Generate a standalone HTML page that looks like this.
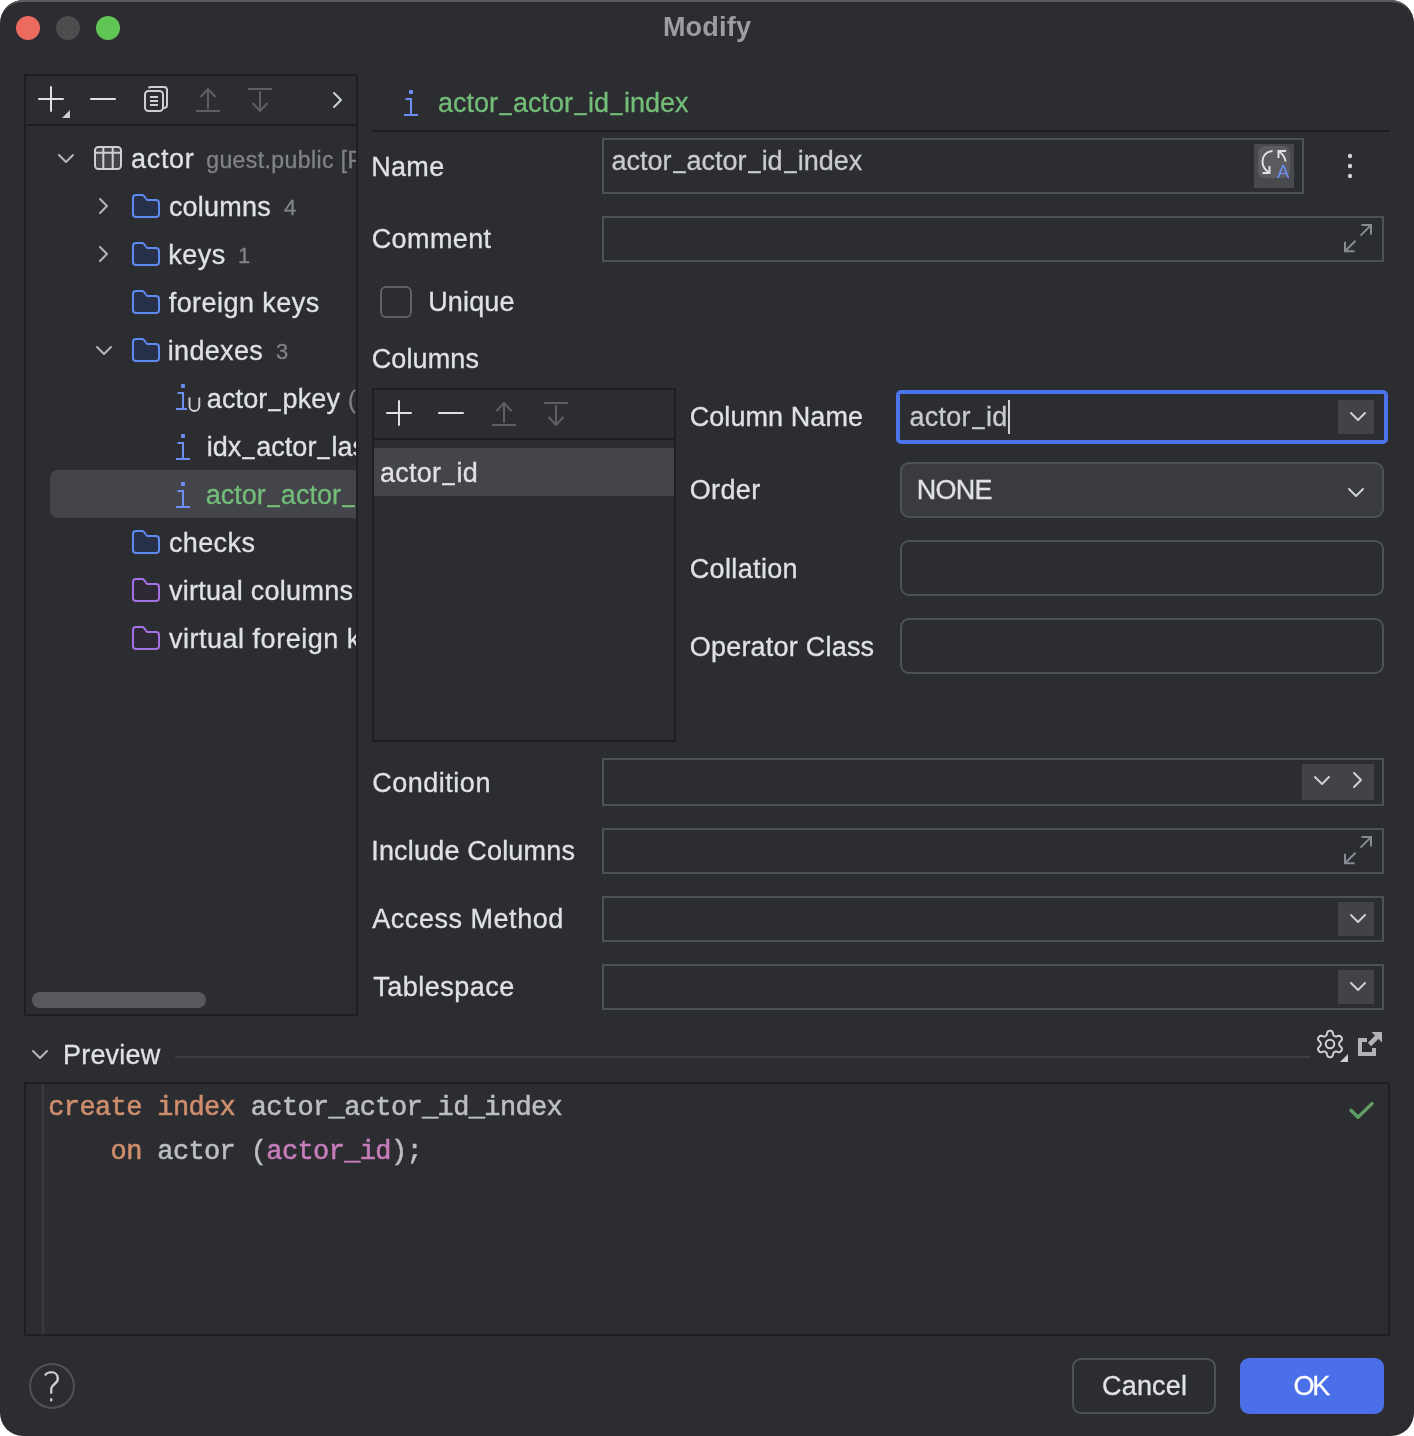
<!DOCTYPE html>
<html lang="en">
<head>
<meta charset="utf-8">
<title>Modify</title>
<style>
*{box-sizing:border-box;margin:0;padding:0}
html,body{width:1414px;height:1436px;background:#fff;overflow:hidden}
body{font-family:"Liberation Sans",sans-serif;font-size:27px;color:#dfe1e5;position:relative}
#win{position:absolute;left:0;top:0;width:1414px;height:1436px;background:#2b2d30;border-radius:23px;overflow:hidden;will-change:transform}
#win:before{content:"";position:absolute;left:0;top:0;right:0;bottom:0;border-radius:23px;border-top:2px solid #5a5b5d;pointer-events:none}
.abs{position:absolute}
.t{position:absolute;white-space:nowrap;line-height:32px;height:32px;-webkit-text-stroke:0.3px currentColor}
.box{position:absolute;border:2px solid #4e5157}
.dark{position:absolute;border:2px solid #1e1f22}
.hl{position:absolute;height:2px;background:#1e1f22}
.dot{position:absolute;width:24px;height:24px;border-radius:50%;top:16px}
svg{position:absolute;overflow:visible}
.ic{fill:none;stroke:#ced0d6;stroke-width:2;stroke-linecap:round;stroke-linejoin:round}
.dim{fill:none;stroke:#5f6063;stroke-width:2;stroke-linecap:round;stroke-linejoin:round}
.fb{fill:#28304a;stroke:#5c8af0;stroke-width:2;stroke-linejoin:round}
.fp{fill:#2f2936;stroke:#a571e6;stroke-width:2;stroke-linejoin:round}
.row{position:absolute;left:0;width:600px;height:48px}
.row .t{top:8px}
.row .sm{top:9px}
.sm{font-size:23px}
.u{display:inline-block;position:relative;top:-3px;transform:scaleX(.8)}
.g{color:#818388}
.dg{font-size:22px}
.lbl{color:#dfe1e5}
</style>
</head>
<body>
<div id="win">
<!-- TITLEBAR -->
<div class="dot" style="left:16px;background:#ed6a5e"></div>
<div class="dot" style="left:56px;background:#4c4d4f"></div>
<div class="dot" style="left:96px;background:#60c554"></div>
<div class="t" id="title" style="left:0;width:1414px;text-align:center;top:11px;font-weight:bold;color:#9c9d9f;-webkit-text-stroke:0;letter-spacing:0.2px">Modify</div>

<!-- LEFT PANEL -->
<div class="dark" style="left:24px;top:74px;width:334px;height:942px"></div>
<div class="hl" style="left:26px;top:124px;width:330px"></div>
<div id="tree" class="abs" style="left:0;top:0;width:356px;height:1014px;overflow:hidden">
<div class="row" style="top:135px"><svg style="left:58px;top:0" width="20" height="48"><path class="ic" style="stroke:#b4b5b9" d="M1,20L8,27L15,20"/></svg><svg style="left:94px;top:11px" width="28" height="24"><rect class="ic" x="1" y="1" width="26" height="22" rx="3.5" style="fill:#43454a"/><path class="ic" style="stroke-linecap:butt" d="M1,6.7H27M9.3,1V23M18.7,1V23"/></svg><span class="t" id="t_actor" style="left:131.0px;letter-spacing:0.7px">actor</span><span class="t g sm" id="t_guest" style="left:206.2px;letter-spacing:0.41px">guest.public [P</span></div>
<div class="row" style="top:183px"><svg style="left:99px;top:0" width="20" height="48"><path class="ic" style="stroke:#b4b5b9" d="M1,16L8,23L1,30"/></svg><svg style="left:132px;top:11px" width="28" height="24"><path class="fb" d="M1,4a3,3 0 0 1 3,-3h6.2a2,2 0 0 1 1.5,0.7l3.3,4.3h9a3,3 0 0 1 3,3v11a3,3 0 0 1 -3,3h-20a3,3 0 0 1 -3,-3z"/></svg><span class="t" id="t_columns" style="left:168.9px;letter-spacing:0.22px">columns</span><span class="t g sm dg" id="t_4" style="left:284px">4</span></div>
<div class="row" style="top:231px"><svg style="left:99px;top:0" width="20" height="48"><path class="ic" style="stroke:#b4b5b9" d="M1,16L8,23L1,30"/></svg><svg style="left:132px;top:11px" width="28" height="24"><path class="fb" d="M1,4a3,3 0 0 1 3,-3h6.2a2,2 0 0 1 1.5,0.7l3.3,4.3h9a3,3 0 0 1 3,3v11a3,3 0 0 1 -3,3h-20a3,3 0 0 1 -3,-3z"/></svg><span class="t" id="t_keys" style="left:168.2px;letter-spacing:0.5px">keys</span><span class="t g sm dg" id="t_1" style="left:238px">1</span></div>
<div class="row" style="top:279px"><svg style="left:132px;top:11px" width="28" height="24"><path class="fb" d="M1,4a3,3 0 0 1 3,-3h6.2a2,2 0 0 1 1.5,0.7l3.3,4.3h9a3,3 0 0 1 3,3v11a3,3 0 0 1 -3,3h-20a3,3 0 0 1 -3,-3z"/></svg><span class="t" id="t_fkeys" style="left:168.7px;letter-spacing:0.45px">foreign keys</span></div>
<div class="row" style="top:327px"><svg style="left:96px;top:0" width="20" height="48"><path class="ic" style="stroke:#b4b5b9" d="M1,20L8,27L15,20"/></svg><svg style="left:132px;top:11px" width="28" height="24"><path class="fb" d="M1,4a3,3 0 0 1 3,-3h6.2a2,2 0 0 1 1.5,0.7l3.3,4.3h9a3,3 0 0 1 3,3v11a3,3 0 0 1 -3,3h-20a3,3 0 0 1 -3,-3z"/></svg><span class="t" id="t_indexes" style="left:167.8px;letter-spacing:0.32px">indexes</span><span class="t g sm dg" id="t_3" style="left:276px">3</span></div>
<div class="row" style="top:375px"><svg style="left:176px;top:9px" width="26" height="30"><rect x="5" y="0" width="4" height="4" rx="1" fill="#6c8ef5" stroke="none"/><path d="M1.5,9H7V24" fill="none" stroke="#6c8ef5" stroke-width="2"/><path d="M0,25H11" stroke="#6c8ef5" stroke-width="2"/><path d="M13.5,13.5v8.6a4.9,4.9 0 0 0 9.8,0v-8.6" fill="none" stroke="#ced0d6" stroke-width="1.9"/></svg><span class="t" id="t_pkey" style="left:206.8px;letter-spacing:0.12px">actor<span class="u">_</span>pkey</span><span class="t g sm" id="t_paren" style="left:348px">(actor_id) UNIQUE</span></div>
<div class="row" style="top:423px"><svg style="left:176px;top:11px" width="24" height="28"><rect x="5" y="0" width="4" height="4" rx="1" fill="#6c8ef5" stroke="none"/><path d="M1.5,9H7V24" fill="none" stroke="#6c8ef5" stroke-width="2"/><path d="M0,25H14" stroke="#6c8ef5" stroke-width="2"/></svg><span class="t" id="t_idx" style="left:206.8px;letter-spacing:0px">idx<span class="u">_</span>actor<span class="u">_</span>last<span class="u">_</span>name</span></div>
<div class="row" style="top:471px"><div class="abs" style="left:50px;top:-1px;width:320px;height:48px;background:#43454a;border-radius:8px 0 0 8px"></div><svg style="left:176px;top:11px" width="24" height="28"><rect x="5" y="0" width="4" height="4" rx="1" fill="#6c8ef5" stroke="none"/><path d="M1.5,9H7V24" fill="none" stroke="#6c8ef5" stroke-width="2"/><path d="M0,25H14" stroke="#6c8ef5" stroke-width="2"/></svg><span class="t" id="t_aa" style="left:205.8px;color:#73bd79">actor<span class="u">_</span>actor<span class="u">_</span>id<span class="u">_</span>index</span></div>
<div class="row" style="top:519px"><svg style="left:132px;top:11px" width="28" height="24"><path class="fb" d="M1,4a3,3 0 0 1 3,-3h6.2a2,2 0 0 1 1.5,0.7l3.3,4.3h9a3,3 0 0 1 3,3v11a3,3 0 0 1 -3,3h-20a3,3 0 0 1 -3,-3z"/></svg><span class="t" id="t_checks" style="left:168.9px;letter-spacing:0.4px">checks</span></div>
<div class="row" style="top:567px"><svg style="left:132px;top:11px" width="28" height="24"><path class="fp" d="M1,4a3,3 0 0 1 3,-3h6.2a2,2 0 0 1 1.5,0.7l3.3,4.3h9a3,3 0 0 1 3,3v11a3,3 0 0 1 -3,3h-20a3,3 0 0 1 -3,-3z"/></svg><span class="t" id="t_vcol" style="left:168.9px;letter-spacing:0.29px">virtual columns</span></div>
<div class="row" style="top:615px"><svg style="left:132px;top:11px" width="28" height="24"><path class="fp" d="M1,4a3,3 0 0 1 3,-3h6.2a2,2 0 0 1 1.5,0.7l3.3,4.3h9a3,3 0 0 1 3,3v11a3,3 0 0 1 -3,3h-20a3,3 0 0 1 -3,-3z"/></svg><span class="t" id="t_vfk" style="left:168.9px;letter-spacing:0.52px">virtual foreign keys</span></div>
<div class="abs" style="left:32px;top:992px;width:174px;height:16px;border-radius:8px;background:#58595c"></div>
</div>
<svg style="left:0;top:0" width="1414" height="130">
<path class="ic" style="stroke:#dfe1e5" d="M39,99H63M51,87V111"/>
<path d="M70,110V118H62Z" fill="#ced0d6"/>
<path class="ic" style="stroke:#dfe1e5" d="M91,99H115"/>
<rect class="ic" x="145" y="91" width="18" height="20" rx="3.5"/>
<path class="ic" d="M149,87.5q1,-0.5 2,-0.5h13a3,3 0 0 1 3,3v15a3,3 0 0 1 -2.5,3"/>
<path class="ic" style="stroke-linecap:butt" d="M150,97h8M150,101h8M150,105h8"/>
<path class="dim" d="M197,111H219M208,108V89M201,96.5L208,89L215,96.5"/>
<path class="dim" d="M249,89H271M260,92V111M253,103.5L260,111L267,103.5"/>
<path class="ic" d="M334,93L341,100L334,107"/>
</svg>

<!-- RIGHT FORM -->
<svg style="left:404px;top:90px" width="16" height="28"><rect x="5" y="0" width="4" height="4" rx="1" fill="#6c8ef5"/><path d="M1.5,9H7V24" fill="none" stroke="#6c8ef5" stroke-width="2"/><path d="M0,25H14" stroke="#6c8ef5" stroke-width="2"/></svg>
<span class="t" id="h_title" style="left:437.9px;top:87.1px;color:#73bd79;letter-spacing:0.0px">actor<span class="u">_</span>actor<span class="u">_</span>id<span class="u">_</span>index</span>
<div class="hl" style="left:372px;top:130px;width:1018px"></div>
<span class="t" id="l_name" style="left:371.2px;top:150.5px;letter-spacing:0.33px">Name</span>
<div class="box" style="left:602px;top:138px;width:702px;height:56px"></div>
<span class="t" id="v_name" style="left:611.5px;top:145px;color:#c8cacf">actor<span class="u">_</span>actor<span class="u">_</span>id<span class="u">_</span>index</span>
<div class="abs" style="left:1254px;top:144px;width:40px;height:44px;background:#47494d"></div>
<div class="abs" style="left:1258px;top:146px;width:32px;height:32px;border-radius:7px;background:#5a5c60"></div>
<span class="t" id="l_comment" style="left:371.7px;top:223.0px;letter-spacing:0.4px">Comment</span>
<div class="box" style="left:602px;top:216px;width:782px;height:46px"></div>
<div class="abs" style="left:380px;top:286px;width:32px;height:32px;border:2px solid #5e6066;border-radius:6px"></div>
<span class="t" id="l_unique" style="left:428.2px;top:286.2px;letter-spacing:0.16px">Unique</span>
<span class="t" id="l_columns" style="left:371.7px;top:343.0px;letter-spacing:0.12px">Columns</span>
<div class="dark" style="left:372px;top:388px;width:304px;height:354px"></div>
<div class="hl" style="left:374px;top:438px;width:300px"></div>
<div class="abs" style="left:374px;top:448px;width:300px;height:48px;background:#43454a"></div>
<span class="t" id="v_colitem" style="left:379.9px;top:456.6px;letter-spacing:0.24px">actor<span class="u">_</span>id</span>
<span class="t" id="l_colname" style="left:689.7px;top:400.5px;letter-spacing:0.08px">Column Name</span>
<div class="abs" style="left:896px;top:390px;width:492px;height:54px;border:4px solid #4c73e9;border-radius:5px"></div>
<div class="abs" style="left:1338px;top:400px;width:36px;height:34px;background:#424346"></div>
<span class="t" id="v_colname" style="left:909.4px;top:400.5px;color:#c8cacf;letter-spacing:0.24px">actor<span class="u">_</span>id</span>
<div class="abs" style="left:1008px;top:400px;width:2px;height:34px;background:#ced0d6"></div>
<span class="t" id="l_order" style="left:689.7px;top:474.4px;letter-spacing:0.38px">Order</span>
<div class="box" style="left:900px;top:462px;width:484px;height:56px;border-radius:9px;background:#393b40"></div>
<span class="t" id="v_none" style="left:916.8px;top:474.4px;letter-spacing:-0.8px">NONE</span>
<span class="t" id="l_collation" style="left:689.7px;top:552.5px;letter-spacing:0.36px">Collation</span>
<div class="box" style="left:900px;top:540px;width:484px;height:56px;border-radius:9px"></div>
<span class="t" id="l_opclass" style="left:689.7px;top:630.9px;letter-spacing:0.22px">Operator Class</span>
<div class="box" style="left:900px;top:618px;width:484px;height:56px;border-radius:9px"></div>
<span class="t" id="l_condition" style="left:372.2px;top:766.7px;letter-spacing:0.52px">Condition</span>
<div class="box" style="left:602px;top:758px;width:782px;height:48px"></div>
<div class="abs" style="left:1302px;top:764px;width:72px;height:36px;background:#424346"></div>
<span class="t" id="l_include" style="left:371.2px;top:835.0px;letter-spacing:0.19px">Include Columns</span>
<div class="box" style="left:602px;top:828px;width:782px;height:46px"></div>
<span class="t" id="l_access" style="left:372.3px;top:902.5px;letter-spacing:0.53px">Access Method</span>
<div class="box" style="left:602px;top:896px;width:782px;height:46px"></div>
<div class="abs" style="left:1338px;top:902px;width:36px;height:34px;background:#424346"></div>
<span class="t" id="l_tablespace" style="left:373.2px;top:970.8px;letter-spacing:0.51px">Tablespace</span>
<div class="box" style="left:602px;top:964px;width:782px;height:46px"></div>
<div class="abs" style="left:1338px;top:970px;width:36px;height:34px;background:#424346"></div>
<svg style="left:0;top:0" width="1414" height="300"><path d="M1272.5,151C1266,151.5 1262.5,156 1262.5,161.5C1262.5,166 1265,170 1269,172.5M1262.5,173H1269.5V166" fill="none" stroke="#dfe1e5" stroke-width="2" stroke-linejoin="miter"/><path d="M1286,151H1278.5V158M1279,151.5C1283,154 1285,157.5 1285.5,161.5" fill="none" stroke="#dfe1e5" stroke-width="2"/><text x="1277" y="177.5" font-size="18.5" fill="#6c8ef5" font-family="Liberation Sans, sans-serif">A</text><circle cx="1350" cy="156" r="2.2" fill="#ced0d6"/><circle cx="1350" cy="166" r="2.2" fill="#ced0d6"/><circle cx="1350" cy="176" r="2.2" fill="#ced0d6"/><path d="M1360.5,235.6L1371.0,225.1M1361.5,225.1H1371.0V234.6" fill="none" stroke="#868a91" stroke-width="2" stroke-linecap="butt" stroke-linejoin="miter"/><path d="M1355.5,240.7L1345.0,251.2M1345.0,241.7V251.2H1354.5" fill="none" stroke="#868a91" stroke-width="2" stroke-linecap="butt" stroke-linejoin="miter"/></svg>
<svg style="left:0;top:0" width="1414" height="1100"><path class="ic" style="stroke:#dfe1e5" d="M387,413H411M399,401V425M439,413H463"/><path class="dim" d="M493,425H515M504,422V403M497,410.5L504,403L511,410.5"/><path class="dim" d="M545,403H567M556,406V425M549,417.5L556,425L563,417.5"/><path d="M1351,413.0L1358,420.0L1365,413.0" fill="none" stroke="#ced0d6" stroke-width="2" stroke-linecap="round" stroke-linejoin="round"/><path d="M1349,489.0L1356,496.0L1363,489.0" fill="none" stroke="#ced0d6" stroke-width="2" stroke-linecap="round" stroke-linejoin="round"/><path d="M1315,777.0L1322,784.0L1329,777.0" fill="none" stroke="#ced0d6" stroke-width="2" stroke-linecap="round" stroke-linejoin="round"/><path d="M1354,773L1361,780L1354,787" fill="none" stroke="#ced0d6" stroke-width="2" stroke-linecap="round" stroke-linejoin="round"/><path d="M1351,915.0L1358,922.0L1365,915.0" fill="none" stroke="#ced0d6" stroke-width="2" stroke-linecap="round" stroke-linejoin="round"/><path d="M1351,983.0L1358,990.0L1365,983.0" fill="none" stroke="#ced0d6" stroke-width="2" stroke-linecap="round" stroke-linejoin="round"/><path d="M1360.5,847.6L1371.0,837.1M1361.5,837.1H1371.0V846.6" fill="none" stroke="#868a91" stroke-width="2" stroke-linecap="butt" stroke-linejoin="miter"/><path d="M1355.5,852.7L1345.0,863.2M1345.0,853.7V863.2H1354.5" fill="none" stroke="#868a91" stroke-width="2" stroke-linecap="butt" stroke-linejoin="miter"/></svg>

<!-- PREVIEW -->
<svg style="left:0;top:1020px" width="1414" height="120"><path d="M33,31L40,38L47,31" fill="none" stroke="#b4b5b9" stroke-width="2" stroke-linecap="round" stroke-linejoin="round"/><rect x="175" y="36" width="1135" height="2" fill="#3c3e43"/><g id="gear" transform="translate(1330,24)" fill="none" stroke="#ced0d6" stroke-width="2" stroke-linejoin="round"><circle r="4.3"/><path id="gearp" d="M9.20,-0.00L9.21,-0.48L9.28,-0.98L9.49,-1.50L9.98,-2.12L10.82,-2.90L11.60,-3.77L11.95,-4.59L11.94,-5.31L11.74,-5.98L11.43,-6.60L11.05,-7.17L10.57,-7.68L9.94,-8.05L9.06,-8.16L7.92,-7.92L6.83,-7.59L6.04,-7.46L5.49,-7.55L5.03,-7.74L4.60,-7.97L4.19,-8.22L3.80,-8.53L3.44,-8.97L3.15,-9.71L2.90,-10.82L2.54,-11.93L2.00,-12.64L1.37,-13.00L0.69,-13.15L0.00,-13.20L-0.69,-13.15L-1.37,-13.00L-2.00,-12.64L-2.54,-11.93L-2.90,-10.82L-3.15,-9.71L-3.44,-8.97L-3.80,-8.53L-4.19,-8.22L-4.60,-7.97L-5.03,-7.74L-5.49,-7.55L-6.04,-7.46L-6.83,-7.59L-7.92,-7.92L-9.06,-8.16L-9.94,-8.05L-10.57,-7.68L-11.05,-7.17L-11.43,-6.60L-11.74,-5.98L-11.94,-5.31L-11.95,-4.59L-11.60,-3.77L-10.82,-2.90L-9.98,-2.12L-9.49,-1.50L-9.28,-0.98L-9.21,-0.48L-9.20,-0.00L-9.21,0.48L-9.28,0.98L-9.49,1.50L-9.98,2.12L-10.82,2.90L-11.60,3.77L-11.95,4.59L-11.94,5.31L-11.74,5.98L-11.43,6.60L-11.05,7.17L-10.57,7.68L-9.94,8.05L-9.06,8.16L-7.92,7.92L-6.83,7.59L-6.04,7.46L-5.49,7.55L-5.03,7.74L-4.60,7.97L-4.19,8.22L-3.80,8.53L-3.44,8.97L-3.15,9.71L-2.90,10.82L-2.54,11.93L-2.00,12.64L-1.37,13.00L-0.69,13.15L-0.00,13.20L0.69,13.15L1.37,13.00L2.00,12.64L2.54,11.93L2.90,10.82L3.15,9.71L3.44,8.97L3.80,8.53L4.19,8.22L4.60,7.97L5.03,7.74L5.49,7.55L6.04,7.46L6.83,7.59L7.92,7.92L9.06,8.16L9.94,8.05L10.57,7.68L11.05,7.17L11.43,6.60L11.74,5.98L11.94,5.31L11.95,4.59L11.60,3.77L10.82,2.90L9.98,2.12L9.49,1.50L9.28,0.98L9.21,0.48Z"/></g><path d="M1348,34V42H1340Z" fill="#ced0d6"/><path d="M1358,18h9v4h-5v10h10v-4h4v8h-18z" fill="#b1b3b5"/><path d="M1371.5,12H1382V22.5Z" fill="#b1b3b5"/><path d="M1377.5,16.5L1369.5,24.5" stroke="#b1b3b5" stroke-width="4.6" fill="none"/><path d="M1351,90.3L1358,97.3L1372,83.6" fill="none" stroke="#5f9f64" stroke-width="3.4" stroke-linecap="round" stroke-linejoin="round"/></svg>
<span class="t" id="l_preview" style="left:63.1px;top:1038.6px;letter-spacing:0.17px">Preview</span>
<div class="dark" style="left:24px;top:1082px;width:1366px;height:254px"></div>
<div class="abs" style="left:42px;top:1084px;width:2px;height:250px;background:#393b40"></div>
<pre id="code" class="abs" style="left:48.3px;top:1086.2px;font-family:'Liberation Mono',monospace;font-size:27px;letter-spacing:-0.63px;line-height:44px;color:#bcbec4;-webkit-text-stroke:0.55px currentColor"><span style="color:#cf8e6d">create index</span> actor_actor_id_index
    <span style="color:#cf8e6d">on</span> actor (<span style="color:#c77dbb">actor_id</span>);</pre>

<!-- BUTTONS -->
<div class="abs" style="left:29px;top:1363px;width:46px;height:46px;border:2px solid #505257;border-radius:50%"></div>
<span class="t" id="b_help" style="left:29px;width:46px;text-align:center;top:1367.5px;height:40px;line-height:40px;font-family:'DejaVu Sans',sans-serif;font-weight:200;font-size:39px;color:#ced0d6;-webkit-text-stroke:0.3px #ced0d6">?</span>
<div class="box" style="left:1072px;top:1358px;width:144px;height:56px;border-radius:9px"></div>
<span class="t" id="b_cancel" style="left:1102.1px;top:1370.4px;letter-spacing:0.16px">Cancel</span>
<div class="abs" style="left:1240px;top:1358px;width:144px;height:56px;border-radius:9px;background:#4b6fe8"></div>
<span class="t" id="b_ok" style="left:1293.6px;top:1370.4px;color:#fff;letter-spacing:-2.4px">OK</span>
</div>
</body>
</html>
